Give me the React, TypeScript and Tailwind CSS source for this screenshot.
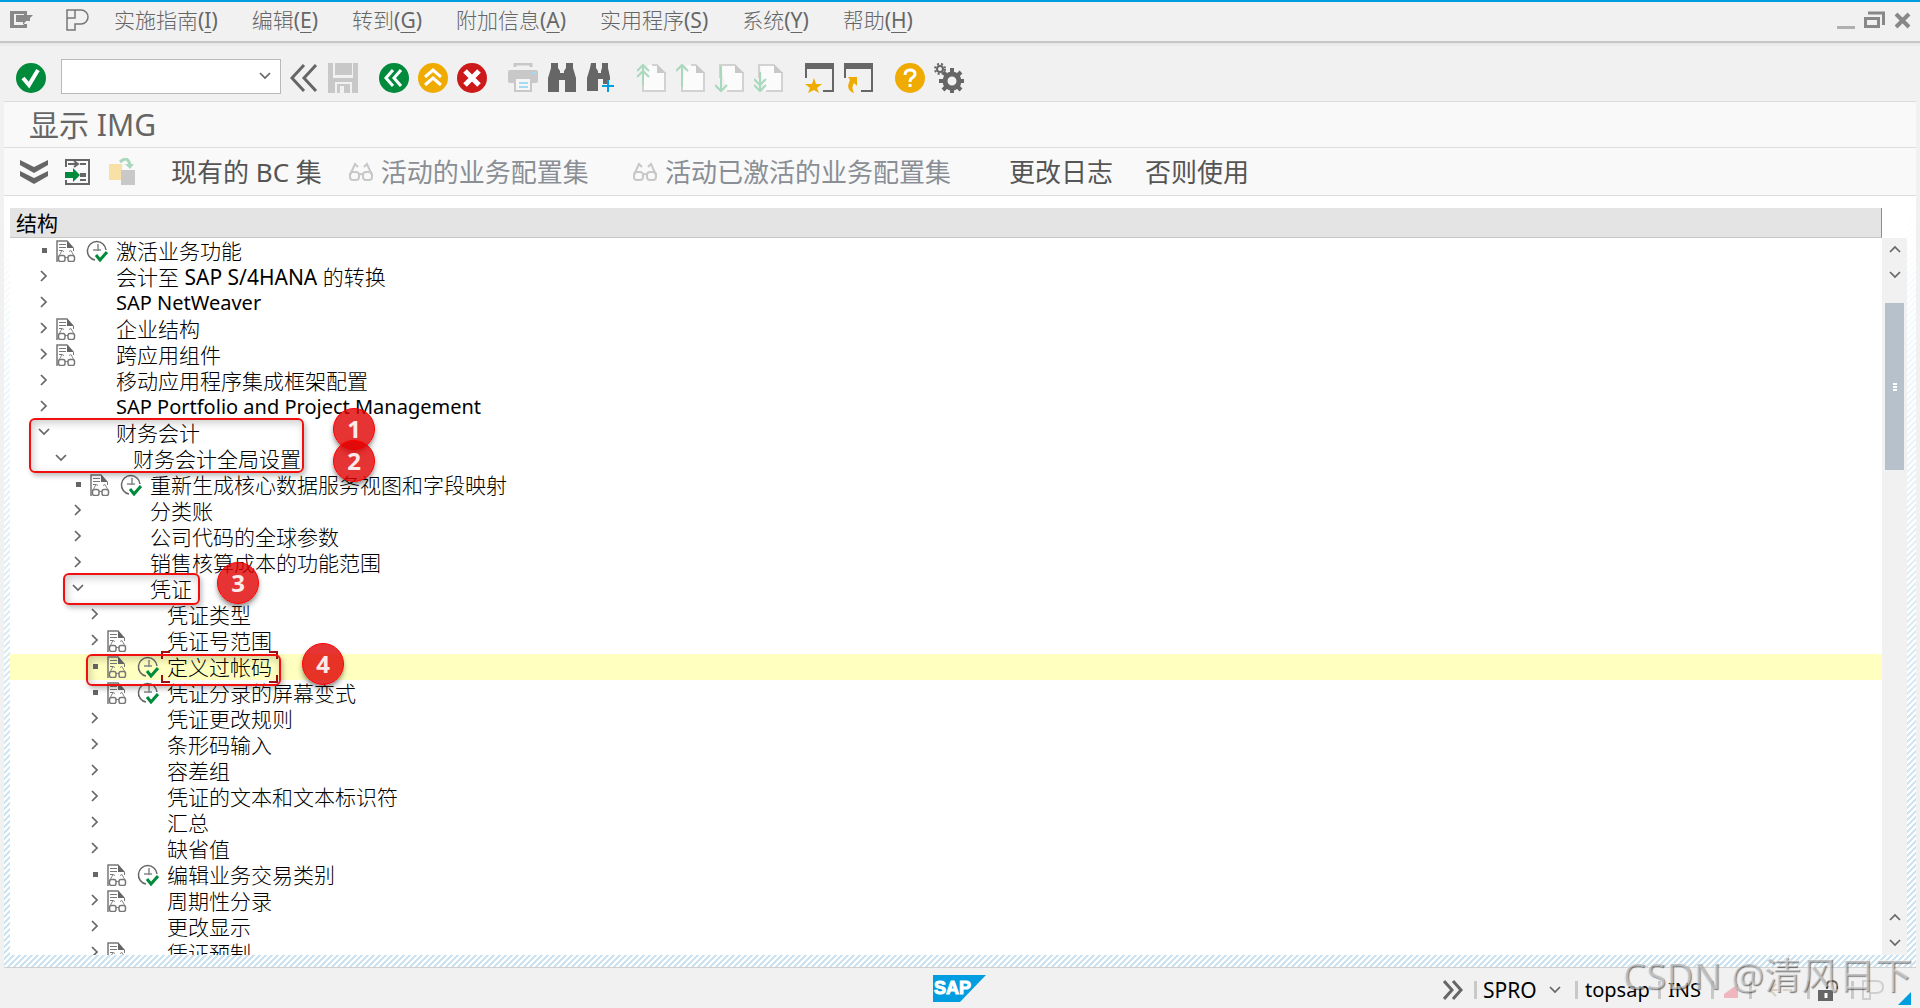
import type { ReactNode } from 'react'

type TreeNode = {
  text: string
  level: number
  state?: 'leaf' | 'open' | 'closed'
  doc?: boolean
  run?: boolean
  selected?: boolean
  latin?: boolean
}

const nodes: TreeNode[] = [
  { text: '激活业务功能', level: 0, state: 'leaf', doc: true, run: true },
  { text: '会计至 SAP S/4HANA 的转换', level: 0 },
  { text: 'SAP NetWeaver', level: 0, latin: true },
  { text: '企业结构', level: 0, doc: true },
  { text: '跨应用组件', level: 0, doc: true },
  { text: '移动应用程序集成框架配置', level: 0 },
  { text: 'SAP Portfolio and Project Management', level: 0, latin: true },
  { text: '财务会计', level: 0, state: 'open' },
  { text: '财务会计全局设置', level: 1, state: 'open' },
  { text: '重新生成核心数据服务视图和字段映射', level: 2, state: 'leaf', doc: true, run: true },
  { text: '分类账', level: 2 },
  { text: '公司代码的全球参数', level: 2 },
  { text: '销售核算成本的功能范围', level: 2 },
  { text: '凭证', level: 2, state: 'open' },
  { text: '凭证类型', level: 3 },
  { text: '凭证号范围', level: 3, doc: true },
  { text: '定义过帐码', level: 3, state: 'leaf', doc: true, run: true, selected: true },
  { text: '凭证分录的屏幕变式', level: 3, state: 'leaf', doc: true, run: true },
  { text: '凭证更改规则', level: 3 },
  { text: '条形码输入', level: 3 },
  { text: '容差组', level: 3 },
  { text: '凭证的文本和文本标识符', level: 3 },
  { text: '汇总', level: 3 },
  { text: '缺省值', level: 3 },
  { text: '编辑业务交易类别', level: 3, state: 'leaf', doc: true, run: true },
  { text: '周期性分录', level: 3, doc: true },
  { text: '更改显示', level: 3 },
  { text: '凭证预制', level: 3, doc: true },
]

const indents = ['pl-[26px]', 'pl-[43px]', 'pl-[60px]', 'pl-[77px]']

const menus = [
  ['实施指南', 'I'],
  ['编辑', 'E'],
  ['转到', 'G'],
  ['附加信息', 'A'],
  ['实用程序', 'S'],
  ['系统', 'Y'],
  ['帮助', 'H'],
]

function Icon({ children }: { children: ReactNode }) {
  return (
    <svg className="w-[30px] h-[30px]" viewBox="0 0 30 30" fill="none" aria-hidden="true">
      {children}
    </svg>
  )
}

function ToolButton({ label, children }: { label: string; children: ReactNode }) {
  return (
    <button type="button" aria-label={label} className="shrink-0">
      <Icon>{children}</Icon>
    </button>
  )
}

function PageArrow({ down, double }: { down?: boolean; double?: boolean }) {
  return (
    <>
      <path d={down ? 'M6 2h14l8 8v18H11' : 'M11 2h9l8 8v18H6V15'} fill="#fbfbfb" />
      <path
        d={down ? 'M5 15V2h15M28 9v19H12' : 'M15 2h5M28 9v19H6V15'}
        stroke="#d2d2d2"
        strokeWidth="2"
      />
      <path d="M20 1v9h9z" fill="#c8c8c8" />
      {down ? (
        <path
          d={double ? 'M6 9v19M0 16l6 6 6-6M0 22l6 6 6-6' : 'M6 3v25M0 22l6 6 6-6'}
          stroke="#a9d8bd"
          strokeWidth="2"
        />
      ) : (
        <path
          d={double ? 'M6 3v19M0 8l6-6 6 6M0 14l6-6 6 6' : 'M6 3v21M0 8l6-6 6 6'}
          stroke="#a9d8bd"
          strokeWidth="2"
        />
      )}
    </>
  )
}

function Glasses() {
  return (
    <svg className="w-[26px] h-[20px]" viewBox="0 0 26 20" fill="none" stroke="#c8c8c8" strokeWidth="2" aria-hidden="true">
      <rect x="2" y="10" width="9" height="8" rx="3" />
      <rect x="15" y="10" width="9" height="8" rx="3" />
      <path d="M11 13q2-2 4 0M2 13l5-11 3 3M24 13 19 2l-3 3" />
    </svg>
  )
}

function DocIcon() {
  return (
    <svg className="w-5 h-[22px]" viewBox="0 0 20 22" fill="none" aria-hidden="true">
      <path d="M1 22V1h10" stroke="#777" strokeWidth="1.500" />
      <path d="M3 4.500h7M3 7.500h7M3 10.500h3M17.500 8v3" stroke="#777" />
      <path d="M11 0v8h7z" fill="#666" />
      <path d="M3 16 6 10.500l2 1M18 16l-3-5.500-2 1M9 17.500h3" stroke="#888" />
      <rect x="2.500" y="15.500" width="6.500" height="6" rx="2" stroke="#777" strokeWidth="1.500" />
      <rect x="12" y="15.500" width="6.500" height="6" rx="2" stroke="#777" strokeWidth="1.500" />
    </svg>
  )
}

function RunIcon() {
  return (
    <svg className="w-[22px] h-[22px]" viewBox="0 0 22 22" fill="none" aria-hidden="true">
      <path d="M20 10A9.300 9.300 0 1 0 9 20" stroke="#666" strokeWidth="1.500" />
      <path d="M7 10h8M12 4v7" stroke="#888" strokeWidth="1.500" />
      <path d="m10 15 4 5 7-8" stroke="#008a3b" strokeWidth="3" />
    </svg>
  )
}

function Chevron({ dir }: { dir: 'up' | 'down' | 'right' }) {
  const d = { up: 'M3 10l5-5 5 5', down: 'M3 5l5 5 5-5', right: 'M5 3l5 5-5 5' }[dir]
  return (
    <svg className="w-4 h-4" viewBox="0 0 16 16" fill="none" stroke="#666" strokeWidth="1.700" aria-hidden="true">
      <path d={d} />
    </svg>
  )
}

function MenuBar() {
  return (
    <header className="flex items-center h-[43px] shrink-0 border-t-2 border-t-[#009de0] border-b-2 border-b-[#c6c6c6] pl-[10px] pr-2 pb-[3px]">
      <button type="button" aria-label="系统菜单" className="mr-[33px]">
        <svg className="w-[23px] h-[18px]" viewBox="0 0 23 18" aria-hidden="true">
          <path d="M0 0h17v4h-3V3H4v11h10v-1h3v4H0z" fill="#888" />
          <path d="M6 4h17l-3 3v3h-4l-3 4v-3H6z" fill="#888" />
        </svg>
      </button>
      <button type="button" aria-label="个人菜单" className="mr-[25px]">
        <svg className="w-[23px] h-[22px]" viewBox="0 0 23 22" fill="none" stroke="#777" strokeWidth="1.500" aria-hidden="true">
          <path d="M1 21V1h14a7 7 0 0 1 0 14H9v6zM1 9h8V1" />
        </svg>
      </button>
      <nav className="flex gap-[34px] text-[21px] leading-[32px] text-[#666]">
        {menus.map(([name, key]) => (
          <button type="button" key={key} className="whitespace-nowrap">
            <span className="font-light">{name}</span>(<span className="underline underline-offset-4 decoration-1">{key}</span>)
          </button>
        ))}
      </nav>
      <div className="ml-auto flex items-end gap-[9px]">
        <button type="button" aria-label="最小化">
          <svg className="w-[18px] h-[18px]" viewBox="0 0 18 18" aria-hidden="true">
            <path d="M0 15h18v3H0z" fill="#b0b0b0" />
          </svg>
        </button>
        <button type="button" aria-label="还原">
          <svg className="w-[21px] h-[18px]" viewBox="0 0 21 18" fill="none" stroke="#888" strokeWidth="3" aria-hidden="true">
            <path d="M1.500 7.500h13v8h-13zM4 2h15.500v12" />
          </svg>
        </button>
        <button type="button" aria-label="关闭">
          <svg className="w-[18px] h-[18px]" viewBox="0 0 18 18" fill="none" stroke="#888" strokeWidth="4" aria-hidden="true">
            <path d="m2 3 13 13M15 3 2 16" />
          </svg>
        </button>
      </div>
    </header>
  )
}

function ToolBar() {
  return (
    <div className="flex items-center h-[58px] shrink-0 pl-[16px] pt-3 bg-gradient-to-b from-[#e6e6e6] to-[#f1f1f1] to-[4px]">
      <ToolButton label="回车">
        <circle cx="15" cy="15" r="15" fill="#008a3b" />
        <path d="m7 15 6 7L22 7" stroke="#fff" strokeWidth="4" />
      </ToolButton>
      <div className="flex items-center w-[220px] h-[35px] ml-[15px] mb-1 bg-white border border-[#b9b9b9]">
        <input aria-label="命令" className="flex-1 min-w-0 h-full px-2 text-[21px] outline-none" />
        <button type="button" aria-label="历史" className="mr-[7px]">
          <Chevron dir="down" />
        </button>
      </div>
      <div className="flex gap-2 ml-[9px]">
        <ToolButton label="隐藏命令栏">
          <path d="M14 2 2 15l12 13M26 2 14 15l12 13" stroke="#666" strokeWidth="3" />
        </ToolButton>
        <ToolButton label="保存">
          <path d="M0 0h5v15h20V0h5v30H0z" fill="#c8c8c8" />
          <path d="M7 0h17v12H7z" fill="#c8c8c8" />
          <path d="M8 30V20h15v10" stroke="#f1f1f1" strokeWidth="2" />
          <path d="M12 23h4v7h-4z" fill="#f1f1f1" />
        </ToolButton>
      </div>
      <div className="flex gap-[9px] ml-[21px]">
        <ToolButton label="返回">
          <circle cx="15" cy="15" r="15" fill="#008a3b" />
          <path d="m14 7-7 8 7 8M22 7l-7 8 7 8" stroke="#fff" strokeWidth="3" />
        </ToolButton>
        <ToolButton label="退出">
          <circle cx="15" cy="15" r="15" fill="#f0ab00" />
          <path d="m7 14 8-7 8 7M7 22l8-7 8 7" stroke="#fff" strokeWidth="3" />
        </ToolButton>
        <ToolButton label="取消">
          <circle cx="15" cy="15" r="15" fill="#cc1919" />
          <path d="m8 8 14 14M22 8 8 22" stroke="#fff" strokeWidth="5" />
        </ToolButton>
      </div>
      <div className="flex gap-[9px] ml-[21px]">
        <ToolButton label="打印">
          <path d="M7 4V1h16v3" stroke="#c8c8c8" strokeWidth="3" />
          <rect y="7" width="30" height="13" rx="2" fill="#c8c8c8" />
          <path d="M6 15h18v14H6z" fill="#c8c8c8" />
          <path d="M8 16h14v11H8z" fill="#f6f6f6" />
          <path d="M24 9h4v2h-4zM11 19h9v2h-9zM11 23h9v2h-9z" fill="#a5daf3" />
        </ToolButton>
        <ToolButton label="查找">
          <path d="M4 0h7v5l2 3v2h4V8l2-3V0h7v5l3 10v14H18V17h-6v12H1V15L4 5z" fill="#666" />
        </ToolButton>
        <ToolButton label="继续查找">
          <path d="M5 0h5v5l2 3v2h3V8l1-3V0h6v5l2 9v3h-3v4h-4v-5h-5v12H1V15L4 5z" fill="#666" />
          <path d="M22 17v12M16 23h12" stroke="#009de0" strokeWidth="2" />
        </ToolButton>
      </div>
      <div className="flex gap-[9px] ml-[21px]">
        <ToolButton label="首页">
          <PageArrow double />
        </ToolButton>
        <ToolButton label="上一页">
          <PageArrow />
        </ToolButton>
        <ToolButton label="下一页">
          <PageArrow down />
        </ToolButton>
        <ToolButton label="末页">
          <PageArrow down double />
        </ToolButton>
      </div>
      <div className="flex gap-[9px] ml-[21px]">
        <ToolButton label="新建会话">
          <path d="M0 0h29v6H0z" fill="#666" />
          <path d="M1 6v9M28 6v22H18" stroke="#666" strokeWidth="2" />
          <path d="m9 15 2 6h6l-5 4 2 5-5-3-6 3 2-5-5-4h7z" fill="#f0ab00" />
        </ToolButton>
        <ToolButton label="创建快捷方式">
          <path d="M0 0h29v6H0z" fill="#666" />
          <path d="M1 6v9M28 6v22H17" stroke="#666" strokeWidth="2" />
          <path d="M4 14h9v9l-3-3q-3 4 0 10-9-3-4-13z" fill="#f0ab00" />
        </ToolButton>
      </div>
      <div className="flex gap-[9px] ml-[21px]">
        <ToolButton label="帮助">
          <circle cx="15" cy="15" r="15" fill="#f0ab00" />
          <path d="M10 12q0-5 5-5t5 4q0 2-3 4-2 1-2 4M15 21v3" stroke="#fff" strokeWidth="3" />
        </ToolButton>
        <ToolButton label="定制本地布局">
          <circle cx="6" cy="6" r="3" stroke="#666" strokeWidth="2" />
          <circle cx="6" cy="6" r="5" stroke="#666" strokeWidth="2" strokeDasharray="2 2" />
          <circle cx="18" cy="18" r="7" stroke="#666" strokeWidth="5" />
          <path d="M18 5v5M18 26v4M5 18h5M26 18h4M9 9l3 3M24 24l3 3M27 9l-3 3M12 24l-3 3" stroke="#666" strokeWidth="4" />
        </ToolButton>
      </div>
    </div>
  )
}

function ActionBar() {
  return (
    <div className="flex items-center h-[48px] shrink-0 mx-1 pl-[16px] bg-[#f9f9f9] border-b border-[#dcdcdc] text-[26px] leading-[36px] text-[#555] whitespace-nowrap">
      <button type="button" aria-label="展开全部" className="mr-[17px]">
        <svg className="w-[28px] h-[24px]" viewBox="0 0 28 24" fill="#666" aria-hidden="true">
          <path d="m0 0 14 7 14-7v5l-14 8L0 5zM0 11l14 7 14-7v5l-14 8-14-8z" />
        </svg>
      </button>
      <button type="button" aria-label="定位" className="mr-[19px]">
        <svg className="w-[25px] h-[26px]" viewBox="0 0 25 26" fill="none" aria-hidden="true">
          <path d="M1 8V1h23v24H1v-4" stroke="#666" strokeWidth="2" />
          <path d="M3 5h9M9 2l4 3-4 3M15 5h6M15 21h6" stroke="#666" strokeWidth="2" />
          <path d="M15 14h6v4h-6z" fill="#666" />
          <path d="M0 13h8V9l7 7-7 7v-4H0z" fill="#008a3b" />
        </svg>
      </button>
      <button type="button" aria-label="复制" className="mr-[36px]">
        <svg className="w-[26px] h-[27px]" viewBox="0 0 26 27" aria-hidden="true">
          <path d="M0 6h13v16H0z" fill="#f9e0a5" />
          <path d="M12 12h14v15H12z" fill="#c8c8c8" />
          <path d="M11 4q8-7 10 3" fill="none" stroke="#a9d8bd" strokeWidth="3" />
          <path d="M16 6h9l-4 5z" fill="#a9d8bd" />
        </svg>
      </button>
      <button type="button">现有的 BC 集</button>
      <button type="button" disabled className="flex items-center gap-[7px] ml-[26px] text-[#8a8f96]">
        <Glasses />
        活动的业务配置集
      </button>
      <button type="button" disabled className="flex items-center gap-[7px] ml-[43px] text-[#8a8f96]">
        <Glasses />
        活动已激活的业务配置集
      </button>
      <button type="button" className="ml-[58px]">更改日志</button>
      <button type="button" className="ml-[32px]">否则使用</button>
    </div>
  )
}

// CJK runs are light, Latin runs keep the regular weight
function NodeText({ text }: { text: string }) {
  return (
    <>
      {text.split(/([\x21-\x7e][\x20-\x7e]*[\x21-\x7e])/).map((part, i) => (
        <span key={i} className={i % 2 ? 'font-normal' : 'font-light'}>
          {part}
        </span>
      ))}
    </>
  )
}

function TreeRow({ node }: { node: TreeNode }) {
  const state = node.state ?? 'closed'
  return (
    <li className={`flex items-center h-[26px] ${indents[node.level]} ${node.selected ? 'bg-[#ffffbf]' : ''}`}>
      {state === 'leaf' ? (
        <span className="flex justify-center w-4 pb-px">
          <span className="w-[5px] h-[5px] bg-[#666]" />
        </span>
      ) : (
        <button type="button" aria-label={`展开 ${node.text}`} aria-expanded={state === 'open'} className="w-4 pb-[3px]">
          <Chevron dir={state === 'open' ? 'down' : 'right'} />
        </button>
      )}
      <span className="w-[26px] ml-1">{node.doc && <DocIcon />}</span>
      <span className="w-[22px] ml-1 mr-2">{node.run && <RunIcon />}</span>
      <span className={`relative leading-[26px] whitespace-pre ${node.latin ? 'text-[20px]' : ''}`}>
        <NodeText text={node.text} />
        {node.selected && (
          <svg className="absolute -left-[6px] -top-[3px] w-[117px] h-[32px]" viewBox="0 0 117 32" fill="none" stroke="#a01010" strokeWidth="2" aria-hidden="true">
            <path d="M1 8V1h8M108 1h8v7M116 24v7h-8M9 31H1v-7" />
          </svg>
        )}
      </span>
    </li>
  )
}

function Marker({ n, className }: { n: number; className: string }) {
  return (
    <span className={`absolute flex items-center justify-center w-[42px] h-[42px] rounded-full border border-[#f00] bg-[#e00000]/80 text-white/90 font-bold text-[24px] leading-[30px] shadow-md shadow-black/40 ${className}`}>
      {n}
    </span>
  )
}

const frame = 'absolute rounded-md border-2 border-[#f01010] shadow-[2px_3px_5px_rgba(0,0,0,0.25),inset_2px_3px_8px_rgba(0,0,0,0.2)]'

function Tree() {
  return (
    <div className="flex-1 min-h-0 mx-1 flex bg-[linear-gradient(to_bottom,#fff,transparent_80%),linear-gradient(135deg,#cce4f2_25%,#fff_25%,#fff_50%,#cce4f2_50%,#cce4f2_75%,#fff_75%)] bg-[size:100%_100%,6px_6px] pl-[6px] pr-[9px] pb-[12px] border-b border-[#d0d0d0]">
      <div className="flex-1 min-w-0 flex flex-col bg-white pt-[12px]">
        <div className="mr-[25px] h-[30px] shrink-0 pl-[6px] bg-[#e4e4e4] border-b border-b-[#c6c6c6] border-r border-r-[#8c8c8c] text-[21px] leading-[30px]">
          结构
        </div>
        <div className="flex-1 min-h-0 flex">
          <div className="relative flex-1 min-w-0 overflow-hidden text-[21px] whitespace-nowrap">
            <ul>
              {nodes.map((node) => (
                <TreeRow key={node.text} node={node} />
              ))}
            </ul>
            <span className={`${frame} left-[19px] top-[180px] w-[275px] h-[55px]`} />
            <span className={`${frame} left-[53px] top-[335px] w-[137px] h-[32px]`} />
            <span className={`${frame} left-[76px] top-[416px] w-[195px] h-[32px]`} />
            <Marker n={1} className="left-[323px] top-[170px]" />
            <Marker n={2} className="left-[323px] top-[202px]" />
            <Marker n={3} className="left-[207px] top-[324px]" />
            <Marker n={4} className="left-[292px] top-[405px]" />
          </div>
          <div className="flex flex-col items-center w-[25px] bg-[#f1f1f1] py-[4px]">
            <button type="button" aria-label="向上滚动">
              <Chevron dir="up" />
            </button>
            <button type="button" aria-label="向下滚动" className="mt-[9px]">
              <Chevron dir="down" />
            </button>
            <div className="flex-1 w-[19px] pt-[20px]">
              <div className="flex flex-col items-center justify-center gap-px h-[167px] bg-[#b7c1cc]">
                <span className="w-1 h-[2px] bg-white" />
                <span className="w-1 h-[2px] bg-white" />
                <span className="w-1 h-[2px] bg-white" />
              </div>
            </div>
            <button type="button" aria-label="向上滚动">
              <Chevron dir="up" />
            </button>
            <button type="button" aria-label="向下滚动" className="mt-[9px]">
              <Chevron dir="down" />
            </button>
          </div>
        </div>
      </div>
    </div>
  )
}

function Separator() {
  return <span className="w-[3px] h-[18px] bg-[#c8c8c8]" />
}

function StatusBar() {
  return (
    <footer className="relative grid grid-cols-[1fr_auto_1fr] items-start h-[40px] shrink-0 pt-[7px] pr-[2px]">
      <span />
      <svg className="w-[53px] h-[27px]" viewBox="0 0 53 27" role="img" aria-label="SAP">
        <path d="M0 0h53L27 27H0z" fill="#009de0" />
        <text x="1" y="19" fill="#fff" stroke="#fff" className="font-['Liberation_Sans',sans-serif] font-bold text-[18px]">
          SAP
        </text>
      </svg>
      <div className="flex items-center justify-end h-[30px] pr-[7px] text-[21px] leading-[30px]">
        <button type="button" aria-label="展开状态栏" className="mr-[11px]">
          <svg className="w-[20px] h-[20px]" viewBox="0 0 20 20" fill="none" stroke="#666" strokeWidth="3" aria-hidden="true">
            <path d="m1 1 8 9-8 9M10 1l8 9-8 9" />
          </svg>
        </button>
        <Separator />
        <button type="button" className="flex items-center justify-between w-[80px] ml-[6px] mr-[12px]">
          SPRO
          <Chevron dir="down" />
        </button>
        <Separator />
        <span className="w-[64px] ml-[7px] mr-[9px] text-[20px]">topsap</span>
        <Separator />
        <span className="w-[35px] ml-[7px] mr-[8px] text-[20px]">INS</span>
        <Separator />
        <svg className="w-[35px] h-[20px]" viewBox="0 0 35 20" aria-hidden="true">
          <path d="M10 18V14L24 4v14z" fill="#f0b6be" />
        </svg>
        <Separator />
        <svg className="w-[55px] h-[20px]" viewBox="0 0 55 20" fill="none" stroke="#d8d0c4" strokeWidth="2" aria-hidden="true">
          <path d="M18 10h9M31 10h9M24 4l-6 6 6 6" />
        </svg>
        <Separator />
        <svg className="w-[41px] h-[26px]" viewBox="0 0 41 26" fill="none" aria-hidden="true">
          <path d="M8 13h15v11H8z" fill="#666" />
          <path d="M17 12V8q0-4 5-4t5 5v3" stroke="#666" strokeWidth="2" />
          <path d="M16 16v5" stroke="#fff" strokeWidth="3" />
        </svg>
        <Separator />
        <svg className="w-[30px] h-[22px] ml-[8px]" viewBox="0 0 30 22" fill="none" stroke="#cfcfcf" strokeWidth="2" aria-hidden="true">
          <path d="M1 20V2h13q7 0 7 6t-7 6H8v6z" />
        </svg>
        <svg className="w-[13px] h-[13px] self-end ml-[6px]" viewBox="0 0 13 13" aria-hidden="true">
          <path d="M13 0v13H0z" fill="#009de0" />
        </svg>
      </div>
      <span className="absolute right-2 bottom-[6px] text-[37px] leading-[54px] text-white/50 [text-shadow:1px_1px_1px_rgba(0,0,0,0.5)] whitespace-nowrap pointer-events-none">
        CSDN @清风日下
      </span>
    </footer>
  )
}

export default function App() {
  return (
    <div className="flex flex-col h-screen overflow-hidden bg-[#f1f1f1] text-black font-['Noto_Sans','Noto_Sans_CJK_SC',sans-serif]">
      <MenuBar />
      <ToolBar />
      <h1 className="h-[47px] shrink-0 mx-1 pl-[25px] bg-[#f9f9f9] border-y border-[#dcdcdc] text-[30px] leading-[45px] text-[#666]">
        显示 IMG
      </h1>
      <ActionBar />
      <Tree />
      <StatusBar />
    </div>
  )
}
